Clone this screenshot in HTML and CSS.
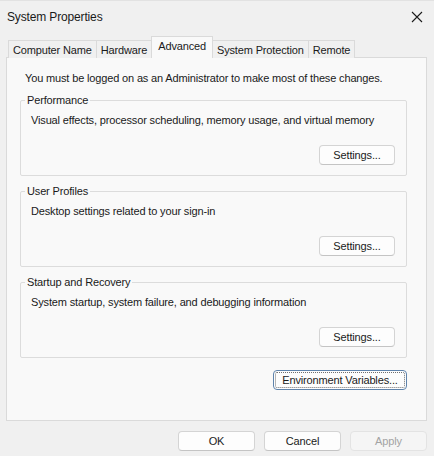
FILE: index.html
```html
<!DOCTYPE html>
<html lang="en">
<head>
    <meta charset="UTF-8">
    <meta name="viewport" content="width=device-width, initial-scale=1.0">
    <title>System Properties</title>
    <link rel="stylesheet" href="styles.css">
</head>
<body>
    <div class="window">
        <div class="titlebar">
            <span class="title">System Properties</span>
            <svg class="close" width="12" height="12" viewBox="0 0 12 12">
                <path d="M1 1 L11 11 M11 1 L1 11" stroke="#1b1b1b" stroke-width="1.1" fill="none"/>
            </svg>
        </div>

        <div class="tabs">
            <div class="tab">Computer Name</div>
            <div class="tab">Hardware</div>
            <div class="tab active">Advanced</div>
            <div class="tab">System Protection</div>
            <div class="tab">Remote</div>
        </div>

        <div class="panel">
            <p class="notice">You must be logged on as an Administrator to make most of these changes.</p>

            <fieldset class="group">
                <legend>Performance</legend>
                <p class="desc">Visual effects, processor scheduling, memory usage, and virtual memory</p>
                <div class="group-actions">
                    <button class="btn btn-settings">Settings...</button>
                </div>
            </fieldset>

            <fieldset class="group">
                <legend>User Profiles</legend>
                <p class="desc">Desktop settings related to your sign-in</p>
                <div class="group-actions">
                    <button class="btn btn-settings">Settings...</button>
                </div>
            </fieldset>

            <fieldset class="group">
                <legend>Startup and Recovery</legend>
                <p class="desc">System startup, system failure, and debugging information</p>
                <div class="group-actions">
                    <button class="btn btn-settings">Settings...</button>
                </div>
            </fieldset>

            <div class="panel-actions">
                <button class="btn btn-env">Environment Variables...</button>
            </div>
        </div>

        <div class="footer">
            <button class="btn btn-dialog">OK</button>
            <button class="btn btn-dialog">Cancel</button>
            <button class="btn btn-dialog" disabled>Apply</button>
        </div>
    </div>
</body>
</html>
```

FILE: styles.css
```css
body {
    margin: 0;
    padding: 0;
    font-family: 'Liberation Sans', Arial, sans-serif;
    font-size: 11px;
    letter-spacing: -0.15px;
    color: #1a1a1a;
    background-color: #f0f0f0;
}

.window {
    width: 434px;
    height: 456px;
    box-sizing: border-box;
    background-color: #f0f0f0;
    border-top: 1px solid #e2e2e2;
}

.titlebar {
    height: 31px;
    display: flex;
    align-items: center;
    justify-content: space-between;
    padding: 0 11px 0 7px;
}

.title {
    font-size: 12px;
    color: #1a1a1a;
}

.close {
    display: block;
}

.tabs {
    display: flex;
    align-items: flex-end;
    padding: 5px 0 0 8px;
    height: 21px;
    position: relative;
    z-index: 1;
}

.tab {
    height: 18px;
    line-height: 18px;
    padding: 0 4px;
    box-sizing: border-box;
    border: 1px solid #dadada;
    border-bottom: none;
    margin-right: -1px;
    background-color: #f0f0f0;
    white-space: nowrap;
}

.tab.active {
    height: 22px;
    line-height: 19px;
    padding: 0 6px;
    margin: 0 -1px 0 0;
    background-color: #f9f9f9;
    position: relative;
    z-index: 2;
}

.panel {
    margin: -1px 0 0 6px;
    width: 421px;
    height: 364px;
    box-sizing: border-box;
    background-color: #f9f9f9;
    border: 1px solid #dadada;
    padding: 12px 19px 0 13px;
}

.notice {
    margin: 0 0 6px 5px;
    line-height: 16px;
}

.group {
    margin: 0 0 7px 0;
    padding: 4px 11px 10px 10px;
    border: 1px solid #dcdcdc;
    border-radius: 2px;
}

.group legend {
    margin-left: -6px;
    padding: 0 2px;
    line-height: 16px;
}

.desc {
    margin: 0;
    line-height: 16px;
}

.group-actions,
.panel-actions {
    display: flex;
    justify-content: flex-end;
}

.group-actions {
    margin-top: 17px;
}

.panel-actions {
    margin-top: 12px;
}

.btn {
    font-family: 'Liberation Sans', Arial, sans-serif;
    font-size: 11px;
    letter-spacing: -0.15px;
    color: #1a1a1a;
    height: 20px;
    padding: 0;
    background-color: #fdfdfd;
    border: 1px solid #d4d4d4;
    border-bottom-color: #c4c4c4;
    border-radius: 4px;
    box-sizing: border-box;
}

.btn-settings {
    width: 76px;
}

.btn-env {
    width: 134px;
    border-color: #5f83ab;
    outline: 1px dotted #707070;
    outline-offset: -3px;
}

.footer {
    display: flex;
    justify-content: flex-end;
    gap: 9px;
    padding: 10px 7px 0 0;
}

.btn-dialog {
    width: 77px;
}

.btn-dialog:disabled {
    color: #a3a3a3;
    background-color: #f5f5f5;
    border-color: #e3e3e3;
}
```
